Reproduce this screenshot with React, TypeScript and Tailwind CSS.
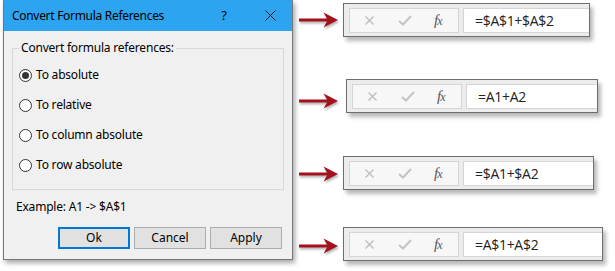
import React, { FC } from 'react';

const options = ['To absolute', 'To relative', 'To column absolute', 'To row absolute'];

const rows = [
	{ text: '=$A$1+$A$2', row: 'mt-[3px]', bar: 'ml-0 w-[247px]', arrow: 'mt-[8px]' },
	{ text: '=A1+A2', row: 'mt-[42px]', bar: 'ml-[3px] w-[252px]', arrow: 'mt-[13px]' },
	{ text: '=$A1+$A2', row: 'mt-[43px]', bar: 'ml-0 w-[251px]', arrow: 'mt-[9px]' },
	{ text: '=A$1+A$2', row: 'mt-[37px]', bar: 'ml-0 w-[260px]', arrow: 'mt-[10px]' },
];

const Arrow: FC<{ className: string }> = ({ className }) => (
	<div className={`w-[44px] shrink-0 ${className}`}>
		<svg width="40" height="18" viewBox="0 0 40 18" className="drop-shadow-[1px_2px_1px_rgba(0,0,0,0.3)]">
			<path d="M0 7.4 H28 L24.5 1.5 L39 9 L24.5 16.5 L28 10.6 H0 Z" fill="#a3121c" />
		</svg>
	</div>
);

const FormulaBar: FC<{ text: string; className: string }> = ({ text, className }) => (
	<div
		className={`h-[34px] shrink-0 border border-[#6e6e6e] bg-[#ececec] pl-[5px] pt-[4px] pb-[3px] flex gap-[4px] shadow-[3px_4px_4px_rgba(0,0,0,0.28)] ${className}`}
	>
		<div className="w-[110px] h-[25px] border border-[#d5d5d5] bg-[#f7f7f7] flex items-center">
			<svg width="9" height="9" viewBox="0 0 9 9" className="ml-[15px]">
				<path d="M0.5 0.5 L8.5 8.5 M8.5 0.5 L0.5 8.5" stroke="#bdbdbd" strokeWidth="1.3" />
			</svg>
			<svg width="14" height="11" viewBox="0 0 14 11" className="ml-[24px]">
				<path d="M1 6 L5 9.5 L13 1" stroke="#c4c4c4" strokeWidth="2" fill="none" />
			</svg>
			<span className="ml-[22px] text-[15px] leading-none italic text-[#555] font-['Liberation_Serif',serif] tracking-[-1px]">
				f<span className="text-[12px]">x</span>
			</span>
		</div>
		<div className="flex-1 h-[25px] border-y border-l border-[#d5d5d5] bg-white flex items-center pl-[11px] text-[14px] text-[#222] font-['Open_Sans',sans-serif] tracking-[-0.3px]">
			{text}
		</div>
	</div>
);

const App: FC = () => {
	return (
		<div className="w-[615px] h-[271px] bg-white flex font-['Noto_Sans',sans-serif] text-[12px] text-black overflow-hidden">
			<div className="w-[299px] shrink-0 pl-[3px]">
				<div className="w-[290px] h-[260px] border border-t-0 border-[#777] bg-[#f0f0f0] shadow-[2px_3px_5px_rgba(0,0,0,0.35)] flex flex-col">
					<div className="h-[31px] bg-[#2ca4ef] flex items-center pl-[8px]">
						<span className="flex-1 text-[12px] tracking-[-0.3px]">Convert Formula References</span>
						<span className="w-[10px] text-center mr-[36px] text-[13px]">?</span>
						<svg width="11" height="11" viewBox="0 0 11 11" className="mr-[16px]">
							<path d="M0.5 0.5 L10.5 10.5 M10.5 0.5 L0.5 10.5" stroke="#111" strokeWidth="1" />
						</svg>
					</div>
					<fieldset className="mx-[8px] mt-[9px] border border-[#d8d8d8] pt-[4px] pb-[9px] pl-[6px]">
						<legend className="ml-0 px-[2px] leading-[16px] tracking-[-0.2px]">Convert formula references:</legend>
						{options.map((o, i) => (
							<div key={o} className="h-[30px] flex items-center">
								<span className="w-[13px] h-[13px] rounded-full border border-[#333] bg-white flex items-center justify-center">
									{i === 0 && <span className="w-[7px] h-[7px] rounded-full bg-[#333]" />}
								</span>
								<span className="ml-[4px] tracking-[-0.2px]">{o}</span>
							</div>
						))}
					</fieldset>
					<div className="mt-[9px] pl-[12px] leading-[16px] tracking-[-0.2px]">Example: A1 -&gt; $A$1</div>
					<div className="mt-[12px] pr-[10px] flex justify-end gap-[4px]">
						<button className="w-[72px] h-[22px] border-2 border-[#0078d7] bg-[#e1e1e1] leading-none">Ok</button>
						<button className="w-[72px] h-[22px] border border-[#adadad] bg-[#e1e1e1] leading-none">Cancel</button>
						<button className="w-[72px] h-[22px] border border-[#adadad] bg-[#e1e1e1] leading-none">Apply</button>
					</div>
				</div>
			</div>
			<div className="flex flex-col">
				{rows.map((r) => (
					<div key={r.text} className={`flex items-start ${r.row}`}>
						<Arrow className={r.arrow} />
						<FormulaBar text={r.text} className={r.bar} />
					</div>
				))}
			</div>
		</div>
	);
};

export default App;
